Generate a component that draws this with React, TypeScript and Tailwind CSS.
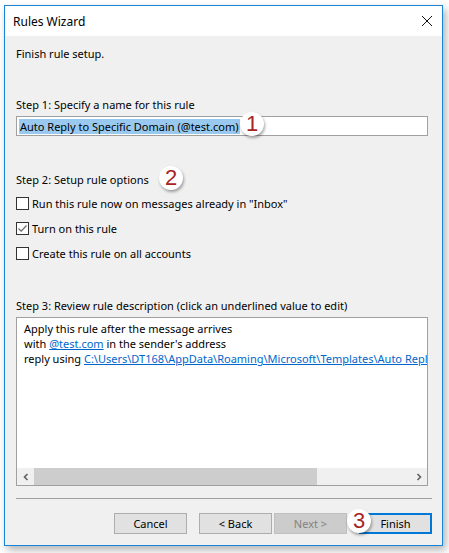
import React from "react";

const font = "font-['Noto_Sans','Liberation_Sans',sans-serif]";

function Badge({ n, className }: { n: string; className: string }) {
  return (
    <div
      className={`absolute w-[24px] h-[24px] rounded-full bg-white shadow-[1px_2px_3px_rgba(0,0,0,0.35)] flex items-center justify-center font-['Liberation_Sans',sans-serif] text-[22px] leading-none text-[#a8231f] ${className}`}
    >
      {n}
    </div>
  );
}

function Checkbox({ checked, label }: { checked?: boolean; label: string }) {
  return (
    <div className="flex items-center h-[15px] gap-[3px]">
      <div className="w-[13px] h-[13px] border border-[#333333] bg-white flex items-center justify-center">
        {checked && (
          <svg width="11" height="11" viewBox="0 0 11 11">
            <path d="M1.5 5.5 L4.2 8.2 L9.5 2.5" fill="none" stroke="#6a6a6a" strokeWidth="1.2" />
          </svg>
        )}
      </div>
      <span>{label}</span>
    </div>
  );
}

function Button({ label, variant }: { label: string; variant?: "disabled" | "default" }) {
  const base = "w-[73px] h-[21px] flex items-center justify-center";
  if (variant === "disabled")
    return <div className={`${base} bg-[#cccccc] border border-[#bfbfbf] text-[#838383]`}>{label}</div>;
  if (variant === "default")
    return <div className={`${base} bg-[#e1e1e1] border-2 border-[#0078d7] text-black`}>{label}</div>;
  return <div className={`${base} bg-[#e1e1e1] border border-[#adadad] text-black`}>{label}</div>;
}

export default function App() {
  return (
    <div className={`w-[449px] h-[553px] bg-white pl-[4px] pt-[5px] ${font} text-[11px] leading-[15px] text-black`}>
      <div className="relative w-[439px] h-[541px] border border-[#1883d7] bg-[#f0f0f0] shadow-[3px_4px_8px_rgba(0,0,0,0.3)] flex flex-col">
        {/* title bar */}
        <div className="h-[30px] bg-white flex items-center justify-between pl-[8px] pr-[8px] shrink-0">
          <span className="text-[12px]">Rules Wizard</span>
          <svg width="12" height="12" viewBox="0 0 12 12" className="mr-[1px]">
            <path d="M1 1 L11 11 M11 1 L1 11" stroke="#111" strokeWidth="1" />
          </svg>
        </div>

        {/* body */}
        <div className="flex flex-col pl-[11px] pr-[10px] pt-[10px]">
          <div>Finish rule setup.</div>

          <div className="mt-[36px]">Step 1: Specify a name for this rule</div>
          <div className="mt-[4px] mr-[4px] h-[20px] border border-[#a0a0a0] bg-white flex items-center pl-[2px]">
            <span className="bg-[#99c9ef] px-[1px]">Auto Reply to Specific Domain (@test.com)</span>
          </div>

          <div className="mt-[36px]">Step 2: Setup rule options</div>
          <div className="mt-[9px] flex flex-col gap-[10px]">
            <Checkbox label={'Run this rule now on messages already in "Inbox"'} />
            <Checkbox checked label="Turn on this rule" />
            <Checkbox label="Create this rule on all accounts" />
          </div>

          <div className="mt-[37px]">Step 3: Review rule description (click an underlined value to edit)</div>
          <div className="mt-[4px] mr-[4px] h-[169px] border border-[#a0a0a0] bg-white flex flex-col overflow-hidden">
            <div className="flex-1 pl-[7px] pt-[3px] whitespace-nowrap overflow-hidden">
              <div>Apply this rule after the message arrives</div>
              <div>
                with <span className="text-[#0066cc] underline">@test.com</span> in the sender's address
              </div>
              <div>
                reply using{" "}
                <span className="text-[#0066cc] underline">
                  C:\Users\DT168\AppData\Roaming\Microsoft\Templates\Auto Reply.oft
                </span>
              </div>
            </div>
            {/* horizontal scrollbar */}
            <div className="h-[17px] bg-[#f0f0f0] flex shrink-0">
              <div className="w-[17px] h-[17px] flex items-center justify-center">
                <svg width="8" height="8" viewBox="0 0 8 8">
                  <path d="M5.5 1 L2.5 4 L5.5 7" fill="none" stroke="#606060" strokeWidth="1.6" />
                </svg>
              </div>
              <div className="flex-1">
                <div className="w-[283px] h-[17px] bg-[#cdcdcd]" />
              </div>
              <div className="w-[17px] h-[17px] flex items-center justify-center">
                <svg width="8" height="8" viewBox="0 0 8 8">
                  <path d="M2.5 1 L5.5 4 L2.5 7" fill="none" stroke="#606060" strokeWidth="1.6" />
                </svg>
              </div>
            </div>
          </div>

          <div className="mt-[12px] h-px bg-[#a0a0a0]" />

          <div className="mt-[14px] flex justify-end">
            <div className="flex">
              <Button label="Cancel" />
              <div className="ml-[12px] flex gap-[2px]">
                <Button label="< Back" />
                <Button label="Next >" variant="disabled" />
              </div>
              <div className="ml-[12px]">
                <Button label="Finish" variant="default" />
              </div>
            </div>
          </div>
        </div>

        <Badge n="1" className="left-[235px] top-[106px]" />
        <Badge n="2" className="left-[154px] top-[160px]" />
        <Badge n="3" className="left-[342px] top-[503px]" />
      </div>
    </div>
  );
}
